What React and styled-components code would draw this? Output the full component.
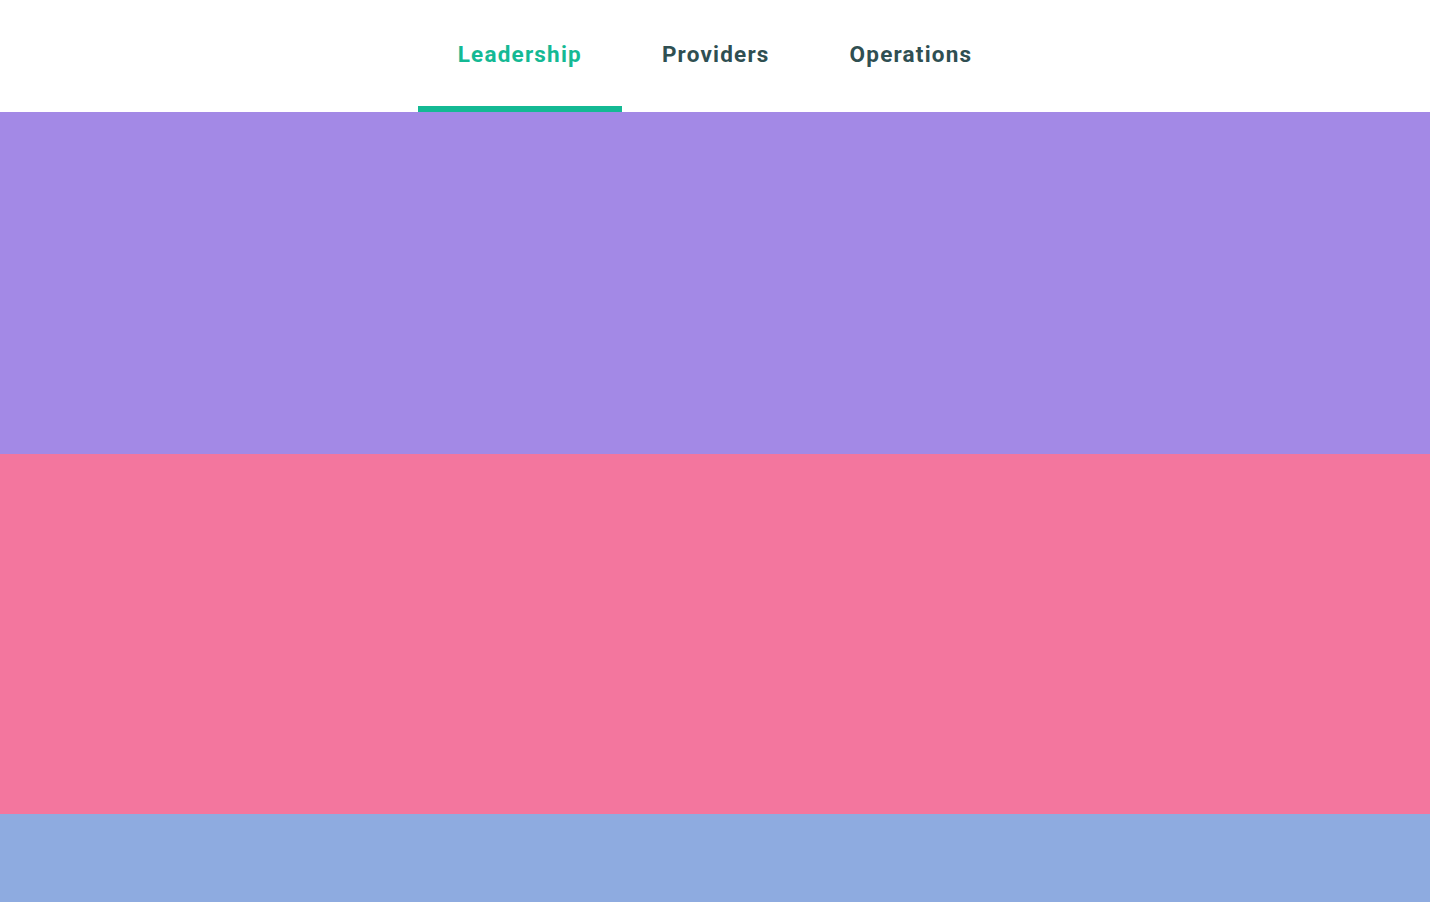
import React, { useState } from "react";
import styled, { createGlobalStyle } from "styled-components";

const Global = createGlobalStyle`
  html, body { margin: 0; padding: 0; background: #ffffff; }
  body { font-family: Roboto, "Noto Sans", sans-serif; }
  * { box-sizing: border-box; }
`;

const Nav = styled.nav`
  display: flex;
  justify-content: center;
  height: 112px;
  background: #ffffff;
`;

const Tab = styled.button`
  display: flex;
  align-items: flex-start;
  padding: 40px 40px 0;
  height: 112px;
  border: none;
  background: transparent;
  cursor: pointer;
  font-family: Roboto, "Noto Sans", sans-serif;
  font-weight: 700;
  font-size: 22.5px;
  line-height: 28px;
  letter-spacing: 1.2px;
  color: ${(p) => (p.$active ? "#14b994" : "#2f4f52")};
  border-bottom: 6px solid ${(p) => (p.$active ? "#14b994" : "transparent")};
`;

const Section = styled.section`
  height: ${(p) => p.$h}px;
  background: ${(p) => p.$bg};
`;

const tabs = ["Leadership", "Providers", "Operations"];

export default function App() {
  const [active, setActive] = useState(0);
  return (
    <>
      <Global />
      <Nav>
        {tabs.map((t, i) => (
          <Tab key={t} $active={i === active} onClick={() => setActive(i)}>
            {t}
          </Tab>
        ))}
      </Nav>
      <Section $h={342} $bg="#a389e6" />
      <Section $h={360} $bg="#f3769e" />
      <Section $h={360} $bg="#8eabe0" />
    </>
  );
}
